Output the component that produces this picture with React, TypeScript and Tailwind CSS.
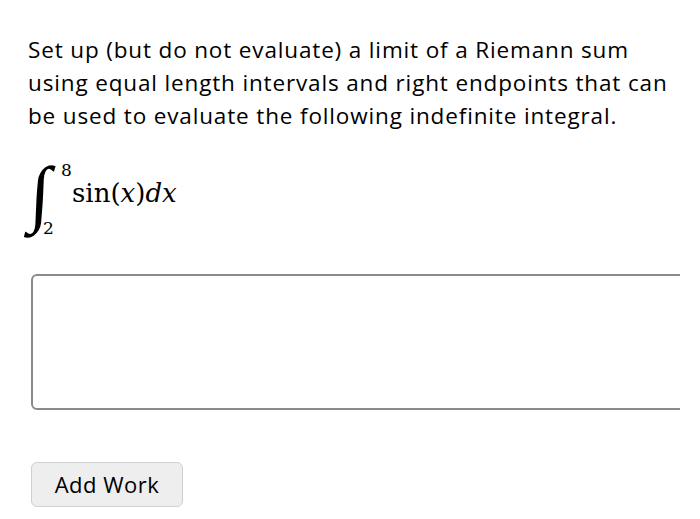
import React from 'react';

const lines = [
  'Set up (but do not evaluate) a limit of a Riemann sum',
  'using equal length intervals and right endpoints that can',
  'be used to evaluate the following indefinite integral.',
];

const App: React.FC = () => {
  return (
    <div className="w-[700px] h-[519px] bg-white overflow-hidden text-black [font-variant-ligatures:none]">
      <div className="pt-[33px] pl-[28px] font-['Open_Sans',sans-serif] text-[22.5px] leading-[33px] tracking-[0.85px]">
        {lines.map((line) => (
          <div key={line} className="whitespace-nowrap">
            {line}
          </div>
        ))}
      </div>

      <div className="mt-[22px] ml-[28px] flex items-start font-['DejaVu_Serif',serif]">
        <div className="relative w-[44px] h-[84px]">
          <span className="absolute left-[0px] top-[2px] text-[74px] leading-none font-['Liberation_Serif',serif] italic -skew-x-3 origin-bottom-left">∫</span>
          <span className="absolute left-[33px] top-[8px] text-[17px] leading-none">8</span>
          <span className="absolute left-[15px] top-[66px] text-[17px] leading-none">2</span>
        </div>
        <div className="pt-[26px] text-[26px] leading-none">
          sin(<i>x</i>)<i>dx</i>
        </div>
      </div>

      <div className="mt-[36px] ml-[31px] w-[649px] overflow-hidden">
        <div className="w-[680px] h-[136px] border-2 border-[#8a8a8a] rounded-[6px] bg-white" />
      </div>

      <div className="mt-[52px] ml-[31px]">
        <button className="w-[152px] h-[45px] rounded-[6px] border border-[#cfcfcf] bg-[#eeeeee] font-['Open_Sans',sans-serif] text-[22px] tracking-[0.5px] text-black">
          Add Work
        </button>
      </div>
    </div>
  );
};

export default App;
